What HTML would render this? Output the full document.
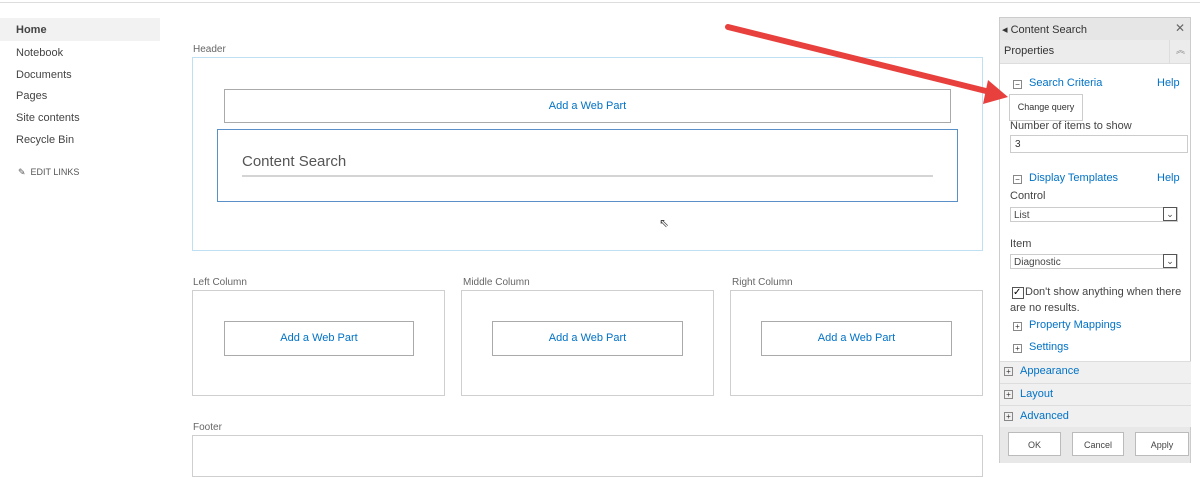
<!DOCTYPE html><html><head><style>
body{margin:0;width:1200px;height:463px;overflow:hidden;background:#fff;font-family:"Liberation Sans",sans-serif;position:relative}
.a{position:absolute}
.nav{font-size:11px;color:#444;left:16px}
.lbl{font-size:10px;color:#666}
.box{position:absolute;border:1px solid #cfcfcf;background:#fff}
.awp{position:absolute;border:1px solid #aaa;color:#0072c6;font-size:11px;text-align:center;box-sizing:border-box}
.blue{color:#0072c6}
.p{font-size:11px;color:#444}
.ib{position:absolute;width:7px;height:7px;border:1px solid #888;font-size:8px;line-height:7px;text-align:center;color:#333}
.row{position:absolute;left:1000px;width:191px;height:21px;background:#f0f0f0;border-top:1px solid #ddd}
.btn{position:absolute;top:432px;height:24px;border:1px solid #bbb;background:#fff;font-size:9px;color:#444;text-align:center;line-height:24px;box-sizing:border-box}
.sel{position:absolute;left:1010px;width:168px;height:15px;border:1px solid #ccc;font-size:10px;color:#444;line-height:15px;padding-left:3px;box-sizing:border-box}
.dd{position:absolute;right:0;top:-1px;width:14px;height:14px;border:1px solid #555;box-sizing:border-box;font-size:9px;text-align:center;line-height:12px}
</style></head><body>
<div class="a" style="left:0;top:0;width:1200px;height:2px;border-bottom:1px solid #ddd"></div>
<div class="a" style="left:0;top:18px;width:160px;height:23px;background:#f2f2f2"></div>
<div class="a nav" style="top:24px;font-weight:bold;color:#444">Home</div>
<div class="a nav" style="top:47px">Notebook</div>
<div class="a nav" style="top:69px">Documents</div>
<div class="a nav" style="top:90px">Pages</div>
<div class="a nav" style="top:112px">Site contents</div>
<div class="a nav" style="top:134px">Recycle Bin</div>
<div class="a" style="left:18px;top:167px;font-size:9px;color:#555">✎ &nbsp;EDIT LINKS</div>

<div class="a lbl" style="left:193px;top:44px">Header</div>
<div class="box" style="left:192px;top:57px;width:789px;height:192px;border-color:#bfe0f2"></div>
<div class="awp" style="left:224px;top:89px;width:727px;height:34px;line-height:32px">Add a Web Part</div>
<div class="a" style="left:217px;top:129px;width:739px;height:71px;border:1px solid #5b8fc7"></div>
<div class="a" style="left:242px;top:153px;font-size:15px;color:#555">Content Search</div>
<div class="a" style="left:242px;top:175px;width:691px;height:2px;background:#d4d4d4"></div>
<div class="a" style="left:659px;top:216px;font-size:12px;color:#444">⇖</div>

<div class="a lbl" style="left:193px;top:277px">Left Column</div>
<div class="a lbl" style="left:463px;top:277px">Middle Column</div>
<div class="a lbl" style="left:732px;top:277px">Right Column</div>
<div class="box" style="left:192px;top:290px;width:251px;height:104px"></div>
<div class="box" style="left:461px;top:290px;width:251px;height:104px"></div>
<div class="box" style="left:730px;top:290px;width:251px;height:104px"></div>
<div class="awp" style="left:224px;top:321px;width:190px;height:35px;line-height:33px">Add a Web Part</div>
<div class="awp" style="left:492px;top:321px;width:191px;height:35px;line-height:33px">Add a Web Part</div>
<div class="awp" style="left:761px;top:321px;width:191px;height:35px;line-height:33px">Add a Web Part</div>
<div class="a lbl" style="left:193px;top:422px">Footer</div>
<div class="box" style="left:192px;top:435px;width:789px;height:40px"></div>

<div class="a" style="left:999px;top:17px;width:192px;height:446px;border:1px solid #ccc;background:#fff;box-sizing:border-box"></div>
<div class="a" style="left:1000px;top:18px;width:190px;height:22px;background:#e6e6e6"></div>
<div class="a" style="left:1002px;top:23px;font-size:11px;color:#333">◂ Content Search</div>
<div class="a" style="left:1175px;top:21px;font-size:12px;color:#666">✕</div>
<div class="a" style="left:1000px;top:40px;width:190px;height:23px;background:#ececec;border-bottom:1px solid #ddd"></div>
<div class="a" style="left:1004px;top:45px;font-size:11px;color:#333">Properties</div>
<div class="a" style="left:1169px;top:40px;width:21px;height:23px;border-left:1px solid #ddd;font-size:9px;color:#888;text-align:center;line-height:20px">︽</div>
<div class="ib" style="left:1013px;top:80px">−</div>
<div class="a blue" style="left:1029px;top:77px;font-size:11px">Search Criteria</div>
<div class="a blue" style="left:1157px;top:77px;font-size:11px">Help</div>
<div class="a" style="left:1009px;top:94px;width:72px;height:25px;border:1px solid #ccc;font-size:9px;color:#333;text-align:center;line-height:25px">Change query</div>
<div class="a p" style="left:1010px;top:120px">Number of items to show</div>
<div class="a" style="left:1010px;top:135px;width:178px;height:18px;border:1px solid #ccc;font-size:10px;color:#333;line-height:18px;padding-left:4px;box-sizing:border-box">3</div>
<div class="ib" style="left:1013px;top:175px">−</div>
<div class="a blue" style="left:1029px;top:172px;font-size:11px">Display Templates</div>
<div class="a blue" style="left:1157px;top:172px;font-size:11px">Help</div>
<div class="a p" style="left:1010px;top:190px">Control</div>
<div class="sel" style="top:207px">List<div class="dd">⌄</div></div>
<div class="a p" style="left:1010px;top:238px">Item</div>
<div class="sel" style="top:254px">Diagnostic<div class="dd">⌄</div></div>
<div class="a" style="left:1012px;top:287px;width:10px;height:10px;border:1px solid #555;font-size:10px;line-height:10px">✓</div>
<div class="a p" style="left:1025px;top:286px">Don't show anything when there</div>
<div class="a p" style="left:1010px;top:302px">are no results.</div>
<div class="ib" style="left:1013px;top:322px">+</div>
<div class="a blue" style="left:1029px;top:319px;font-size:11px">Property Mappings</div>
<div class="ib" style="left:1013px;top:344px">+</div>
<div class="a blue" style="left:1029px;top:341px;font-size:11px">Settings</div>
<div class="row" style="top:361px"></div><div class="ib" style="left:1004px;top:367px">+</div><div class="a blue" style="left:1020px;top:365px;font-size:11px">Appearance</div>
<div class="row" style="top:383px"></div><div class="ib" style="left:1004px;top:390px">+</div><div class="a blue" style="left:1020px;top:388px;font-size:11px">Layout</div>
<div class="row" style="top:405px"></div><div class="ib" style="left:1004px;top:412px">+</div><div class="a blue" style="left:1020px;top:410px;font-size:11px">Advanced</div>
<div class="a" style="left:1000px;top:427px;width:190px;height:36px;background:#e8e8e8"></div>
<div class="btn" style="left:1008px;width:53px">OK</div>
<div class="btn" style="left:1072px;width:52px">Cancel</div>
<div class="btn" style="left:1135px;width:54px">Apply</div>

<svg class="a" style="left:0;top:0" width="1200" height="463"><line x1="728" y1="27" x2="990" y2="92" stroke="#e8403d" stroke-width="6" stroke-linecap="round"/><polygon points="1008,97 983,104 988,80" fill="#e8403d"/></svg>
</body></html>
